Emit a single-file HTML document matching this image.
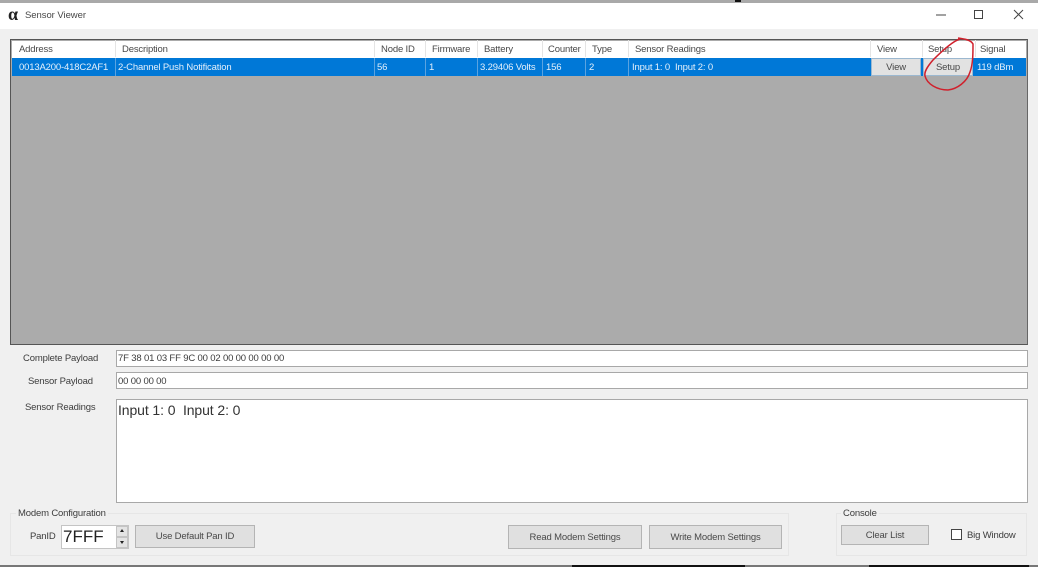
<!DOCTYPE html>
<html><head><meta charset="utf-8"><style>
html,body{margin:0;padding:0;background:#f0f0f0}
#w{position:relative;width:1038px;height:567px;overflow:hidden;background:#f0f0f0;font-family:"Liberation Sans",sans-serif;font-size:9.500px;letter-spacing:-.16px;color:#3c3c3c;filter:blur(.35px)}
.a{position:absolute;box-sizing:border-box}
.t{position:absolute;white-space:nowrap;line-height:12px}
.h{top:44px;color:#484848}
.r{top:62px;color:#e4f0fb}
.s{position:absolute;width:1px;background:#e4e4e4;top:40px;height:17px}
.s2{position:absolute;width:1px;background:#5ba3e0;top:58px;height:18px}
.b{position:absolute;box-sizing:border-box;background:#e0e0e0;border:1px solid #b4b4b4;text-align:center;color:#484848}
.i{position:absolute;box-sizing:border-box;background:#fff;border:1px solid #a8a8a8}
.g{position:absolute;box-sizing:border-box;border:1px solid #e6e6e6}
</style></head><body><div id="w">
<div class="a" style="left:0;top:0;width:1038px;height:3px;background:#a9a9a9"></div>
<div class="a" style="left:0;top:3px;width:1038px;height:26px;background:#fff"></div>
<div class="a" style="left:735px;top:0;width:6px;height:2px;background:#111"></div>
<div class="t" style="left:8px;top:5px;font:bold 18px/18px 'Liberation Serif',serif;letter-spacing:0;color:#222">α</div>
<div class="t" style="left:25px;top:10px;color:#484848;letter-spacing:-.05px">Sensor Viewer</div>
<svg class="a" style="left:930px;top:6px" width="100" height="18" fill="none" stroke="#444" stroke-width="1"><path d="M6 9H16"/><rect x="44.500" y="4.500" width="8" height="8"/><path d="M84 4L93 13M93 4L84 13"/></svg>

<div class="a" style="left:10px;top:39px;width:1018px;height:306px;background:#ababab;border:1px solid #555;border-right-color:#666"></div>
<div class="a" style="left:12px;top:41px;width:1014px;height:17px;background:#fff"></div>
<div class="a" style="left:12px;top:58px;width:1014px;height:18px;background:#0078d7"></div>
<div class="s" style="left:115px"></div><div class="s" style="left:374px"></div><div class="s" style="left:425px"></div><div class="s" style="left:477px"></div><div class="s" style="left:542px"></div><div class="s" style="left:585px"></div><div class="s" style="left:628px"></div><div class="s" style="left:870px"></div><div class="s" style="left:922px"></div><div class="s" style="left:975px"></div>
<div class="s2" style="left:115px"></div><div class="s2" style="left:374px"></div><div class="s2" style="left:425px"></div><div class="s2" style="left:477px"></div><div class="s2" style="left:542px"></div><div class="s2" style="left:585px"></div><div class="s2" style="left:628px"></div>
<div class="t h" style="left:19px">Address</div>
<div class="t h" style="left:122px">Description</div>
<div class="t h" style="left:381px">Node ID</div>
<div class="t h" style="left:432px">Firmware</div>
<div class="t h" style="left:484px">Battery</div>
<div class="t h" style="left:548px">Counter</div>
<div class="t h" style="left:592px">Type</div>
<div class="t h" style="left:635px">Sensor Readings</div>
<div class="t h" style="left:877px">View</div>
<div class="t h" style="left:928px">Setup</div>
<div class="t h" style="left:980px">Signal</div>
<div class="t r" style="left:19px">0013A200-418C2AF1</div>
<div class="t r" style="left:118px">2-Channel Push Notification</div>
<div class="t r" style="left:377px">56</div>
<div class="t r" style="left:429px">1</div>
<div class="t r" style="left:480px">3.29406 Volts</div>
<div class="t r" style="left:546px">156</div>
<div class="t r" style="left:589px">2</div>
<div class="t r" style="left:632px">Input 1: 0&nbsp; Input 2: 0</div>
<div class="t r" style="left:977px">119 dBm</div>
<div class="b" style="left:871px;top:58px;width:50px;height:18px;line-height:17px;background:#e2e2e2;border-color:#9cb8d0">View</div>
<div class="b" style="left:923px;top:58px;width:50px;height:18px;line-height:17px;background:#e2e2e2;border-color:#9cb8d0">Setup</div>
<svg class="a" style="left:915px;top:30px" width="70" height="66" fill="none" stroke="#d0202c" stroke-width="1.500"><path d="M45 9C38 11 28 20 18 30C12 37 9 42 10 46C12 54 22 60 33 60C42 59 52 52 55 42C58 34 58 24 58 14C56 10 50 9 43 8"/></svg>

<div class="t" style="left:23px;top:353px">Complete Payload</div>
<div class="t" style="left:28px;top:376px">Sensor Payload</div>
<div class="t" style="left:25px;top:402px">Sensor Readings</div>
<div class="i" style="left:116px;top:350px;width:912px;height:17px"></div>
<div class="t" style="left:118px;top:353px">7F 38 01 03 FF 9C 00 02 00 00 00 00 00</div>
<div class="i" style="left:116px;top:372px;width:912px;height:17px"></div>
<div class="t" style="left:118px;top:376px">00 00 00 00</div>
<div class="i" style="left:116px;top:399px;width:912px;height:104px"></div>
<div class="t" style="left:118px;top:402px;font-size:14px;line-height:16px;letter-spacing:-.1px;color:#333">Input 1: 0&nbsp; Input 2: 0</div>

<div class="g" style="left:10px;top:513px;width:779px;height:43px"></div>
<div class="t" style="left:16px;top:508px;background:#f0f0f0;padding:0 2px">Modem Configuration</div>
<div class="t" style="left:30px;top:531px">PanID</div>
<div class="i" style="left:61px;top:525px;width:68px;height:24px;border-color:#c4c4c4"></div>
<div class="t" style="left:63px;top:527px;font-size:17px;line-height:19px;letter-spacing:0;color:#222">7FFF</div>
<div class="a" style="left:116px;top:526px;width:12px;height:11px;background:#e4e4e4;border:1px solid #c4c4c4"></div>
<div class="a" style="left:116px;top:537px;width:12px;height:11px;background:#e4e4e4;border:1px solid #c4c4c4"></div>
<div class="a" style="left:119.500px;top:529px;border:2.500px solid transparent;border-top:0;border-bottom:3px solid #222"></div>
<div class="a" style="left:119.500px;top:541px;border:2.500px solid transparent;border-bottom:0;border-top:3px solid #222"></div>
<div class="b" style="left:135px;top:525px;width:120px;height:23px;line-height:22px">Use Default Pan ID</div>
<div class="b" style="left:508px;top:525px;width:134px;height:24px;line-height:23px">Read Modem Settings</div>
<div class="b" style="left:649px;top:525px;width:133px;height:24px;line-height:23px">Write Modem Settings</div>

<div class="g" style="left:836px;top:513px;width:191px;height:43px"></div>
<div class="t" style="left:841px;top:508px;background:#f0f0f0;padding:0 2px">Console</div>
<div class="b" style="left:841px;top:525px;width:88px;height:20px;line-height:19px">Clear List</div>
<div class="a" style="left:951px;top:529px;width:11px;height:11px;background:#fff;border:1px solid #444"></div>
<div class="t" style="left:967px;top:530px">Big Window</div>

<div class="a" style="left:0;top:565px;width:1038px;height:2px;background:#777"></div>
<div class="a" style="left:572px;top:565px;width:173px;height:2px;background:#111"></div>
<div class="a" style="left:869px;top:565px;width:160px;height:2px;background:#111"></div>
</div></body></html>
